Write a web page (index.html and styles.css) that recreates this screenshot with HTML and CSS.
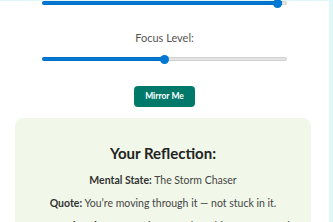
FILE: index.html
```html
<!DOCTYPE html>
<html>
<head>
<title>Mood Mirror</title>
<link rel="stylesheet" href="styles.css">
</head>
<body>

<div class="container">
  <div class="slider-group first">
    <input type="range" class="slider" id="energy" min="0" max="100" value="98"
      style="background: linear-gradient(to right, #0078d4 98%, #e4e4e4 98%);">
  </div>

  <div class="slider-group">
    <label class="slider-label" for="focus">Focus Level:</label>
    <input type="range" class="slider" id="focus" min="0" max="100" value="50"
      style="background: linear-gradient(to right, #0078d4 50%, #e4e4e4 50%);">
  </div>

  <button class="mirror-btn">Mirror Me</button>

  <div class="reflection">
    <h2>Your Reflection:</h2>
    <p><strong>Mental State:</strong> The Storm Chaser</p>
    <p><strong>Quote:</strong> You’re moving through it — not stuck in it.</p>
    <p><strong>Suggested Action:</strong> Try 5 minutes of breathing. Focus on the next step.</p>
  </div>
</div>

</body>
</html>
```

FILE: styles.css
```css
body {
  margin: 0;
  background-color: #e0f7fa;
  font-family: Lato, "Noto Sans", sans-serif;
  color: #333;
  overflow: hidden;
}

.container {
  width: 329px;
  box-sizing: border-box;
  padding: 0 15px 20px;
  background-color: #fff;
  text-align: center;
}

.slider-group {
  margin-bottom: 25px;
}

.slider-group.first {
  margin-top: -2px;
  margin-bottom: 26px;
}

.slider-label {
  display: block;
  font-size: 11px;
  line-height: 14px;
  color: #555;
  margin-bottom: 12px;
}

.slider {
  -webkit-appearance: none;
  appearance: none;
  display: block;
  width: 245px;
  height: 4px;
  margin: 3px auto;
  border-radius: 2px;
  outline: none;
  box-shadow: inset 0 0 0 1px rgba(0, 0, 0, 0.08);
}

.slider::-webkit-slider-thumb {
  -webkit-appearance: none;
  width: 9px;
  height: 9px;
  border-radius: 50%;
  background: #0078d4;
  cursor: pointer;
}

.mirror-btn {
  display: block;
  margin: 0 auto;
  height: 21px;
  line-height: 21px;
  padding: 0 11px;
  border: none;
  border-radius: 4px;
  background-color: #00796b;
  color: #fff;
  font-family: Lato, sans-serif;
  font-size: 8.5px;
  font-weight: bold;
  cursor: pointer;
}

.reflection {
  margin-top: 11px;
  padding: 26px 12px 23px;
  background-color: #f1f8e9;
  border-radius: 8px;
  width: 296px;
  box-sizing: border-box;
}

.reflection h2 {
  margin: 0 0 11px;
  font-size: 15px;
  color: #222;
}

.reflection p {
  margin: 0 0 9px;
  font-size: 10.5px;
  line-height: 14px;
  color: #444;
}

.reflection strong {
  color: #333;
}
```
